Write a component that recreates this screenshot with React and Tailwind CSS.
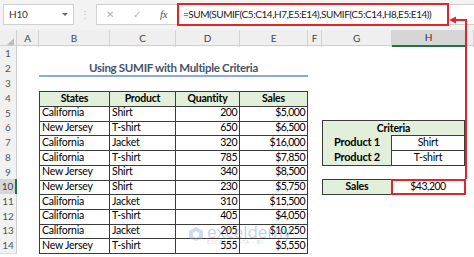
import React from 'react';

const COLS = 'grid grid-cols-[17px_22px_71px_66px_64px_68px_14px_70px_73px_1fr]';

const data = [
  ['California', 'Shirt', 200, '$5,000'],
  ['New Jersey', 'T-shirt', 650, '$6,500'],
  ['California', 'Jacket', 320, '$16,000'],
  ['California', 'T-shirt', 785, '$7,850'],
  ['New Jersey', 'Shirt', 340, '$8,500'],
  ['New Jersey', 'Shirt', 230, '$5,750'],
  ['California', 'Jacket', 310, '$15,500'],
  ['California', 'T-shirt', 405, '$4,050'],
  ['California', 'Jacket', 205, '$10,250'],
  ['New Jersey', 'T-shirt', 555, '$5,550'],
];

const B = 'border-[#3b3b3b]';
const GREEN = 'bg-[#e2efda]';
const NUM = 'tracking-[-0.5px]';

function Cell({ className = '', children }) {
  return (
    <div className={`h-full flex items-center overflow-hidden whitespace-nowrap ${className}`}>
      {children}
    </div>
  );
}

function RowHead({ n }) {
  const sel = n === 10;
  return (
    <div
      className={`h-full flex items-center justify-center text-[10px] tracking-normal border-b border-b-[#dcdcdc] ${
        sel ? 'bg-[#d6d6d6] border-r-2 border-r-[#217346] text-[#444]' : 'bg-[#f1f1f1] border-r border-r-[#cfcfcf] text-[#555]'
      }`}
    >
      {n}
    </div>
  );
}

function Toolbar() {
  return (
    <div className="h-[30px] bg-[#f3f3f3] flex items-start pt-[4px] pl-[3px]">
      <div className="w-[71px] h-[21px] bg-white border border-[#d0d0d0] flex items-center justify-between px-[5px]">
        <span className="text-[10px] text-[#333]">H10</span>
        <span className="w-0 h-0 border-l-[3px] border-r-[3px] border-t-[3px] border-l-transparent border-r-transparent border-t-[#666]" />
      </div>
      <div className="w-[22px] h-[21px] flex items-center justify-center text-[#c4c4c4] text-[10px]">⋮</div>
      <div className="flex-1 h-[21px] bg-white border border-[#d0d0d0] border-r-0 flex items-center">
        <div className="w-[80px] flex items-center justify-around text-[10px]">
          <span className="text-[#b4b4b4]">✕</span>
          <span className="text-[#b4b4b4]">✓</span>
          <span className="text-[#555] italic font-['Liberation_Serif',serif] text-[11px]">fx</span>
        </div>
        <span className="pl-[6px] text-[10px] text-[#222] tracking-[-0.45px]">
          =SUM(SUMIF(C5:C14,H7,E5:E14),SUMIF(C5:C14,H8,E5:E14))
        </span>
      </div>
    </div>
  );
}

function ColHeader() {
  const letters = ['A', 'B', 'C', 'D', 'E', 'F', 'G', 'H', ''];
  return (
    <div className={`${COLS} h-[16px] bg-[#efefef] border-b border-[#cfcfcf]`}>
      <div className="h-full flex items-end justify-end pr-[2px] pb-[2px] border-r border-[#cfcfcf]">
        <svg width="7" height="7" viewBox="0 0 7 7">
          <polygon points="7,0 7,7 0,7" fill="#bdbdbd" />
        </svg>
      </div>
      {letters.map((l, i) => (
        <div
          key={i}
          className={`h-full flex items-center justify-center text-[10px] ${
            l === 'H'
              ? 'bg-[#d6d6d6] border-b-2 border-[#217346] text-[#333]'
              : 'border-r border-[#d4d4d4] text-[#444]'
          }`}
        >
          {l}
        </div>
      ))}
    </div>
  );
}

function Row({ n, h, children }) {
  return (
    <div className={`${COLS} ${h}`}>
      <RowHead n={n} />
      {children}
    </div>
  );
}

function Empty({ count }) {
  return Array.from({ length: count }).map((_, i) => <Cell key={`e${i}`} />);
}

function App() {
  return (
    <div className="relative w-[474px] h-[257px] overflow-hidden bg-white font-['Lato',sans-serif] text-[10.5px] tracking-[-0.2px] text-black">
      <Toolbar />
      <ColHeader />

      <Row n={1} h="h-[15px]">
        <Empty count={9} />
      </Row>
      <Row n={2} h="h-[15px]">
        <Cell />
        <Cell className="col-span-4 justify-center border-b-2 border-[#8eaadb] font-bold text-[11.5px] tracking-[-0.3px] text-[#44546a]">
          Using SUMIF with Multiple Criteria
        </Cell>
        <Empty count={4} />
      </Row>
      <Row n={3} h="h-[15px]">
        <Empty count={9} />
      </Row>
      <Row n={4} h="h-[14.73px]">
        <Cell />
        {['States', 'Product', 'Quantity', 'Sales'].map((t, i) => (
          <Cell
            key={t}
            className={`justify-center font-bold ${GREEN} border-t border-b border-r ${i === 0 ? 'border-l' : ''} ${B}`}
          >
            {t}
          </Cell>
        ))}
        <Empty count={4} />
      </Row>

      {data.map((d, idx) => {
        const n = idx + 5;
        return (
          <Row key={n} n={n} h="h-[14.73px]">
            <Cell />
            <Cell className={`pl-[2px] border-l border-r border-b ${B}`}>{d[0]}</Cell>
            <Cell className={`pl-[2px] border-r border-b ${B}`}>{d[1]}</Cell>
            <Cell className={`justify-end pr-[2px] ${NUM} border-r border-b ${B}`}>{d[2]}</Cell>
            <Cell className={`justify-end pr-[2px] ${NUM} border-r border-b ${B}`}>{d[3]}</Cell>
            <Cell />
            {n === 6 && (
              <Cell className={`col-span-2 justify-center font-bold ${GREEN} border ${B}`}>Criteria</Cell>
            )}
            {(n === 7 || n === 8) && (
              <>
                <Cell className={`justify-center font-bold text-[11px] ${GREEN} border-l border-r border-b ${B}`}>
                  Product {n - 6}
                </Cell>
                <Cell className={`justify-center border-r border-b ${B}`}>{n === 7 ? 'Shirt' : 'T-shirt'}</Cell>
              </>
            )}
            {n === 10 && (
              <>
                <Cell className={`justify-center font-bold ${GREEN} border ${B}`}>Sales</Cell>
                <Cell className={`justify-center ${NUM} border-t border-r border-b ${B}`}>$43,200</Cell>
              </>
            )}
            {n !== 6 && n !== 7 && n !== 8 && n !== 10 && <Empty count={2} />}
            <Cell />
          </Row>
        );
      })}

      {/* watermark */}
      <div className="absolute left-[188px] top-[223px] flex items-center gap-[3px] opacity-40 pointer-events-none">
        <svg width="16" height="16" viewBox="0 0 16 16">
          <path d="M8 1 L15 5 L15 12 L8 15 L1 12 L1 5 Z" fill="#8fa6c4" />
          <path d="M8 5 L11 7 L11 10 L8 12 L5 10 L5 7 Z" fill="#fff" />
        </svg>
        <div className="flex flex-col leading-none">
          <span className="text-[17px] tracking-normal text-[#6f8db5] font-['Open_Sans',sans-serif]">exceldemy</span>
          <span className="text-[5px] tracking-[1px] text-[#8fa0b8]">EXCEL · DATA · BI</span>
        </div>
      </div>

      {/* annotations */}
      <svg className="absolute inset-0 pointer-events-none" width="474" height="257">
        <rect x="178" y="4" width="270" height="21" fill="none" stroke="#e0262b" strokeWidth="2" />
        <polyline points="466,179 466,20 455,20" fill="none" stroke="#e0262b" strokeWidth="2" />
        <polygon points="449,20 456,16.5 456,23.5" fill="#e0262b" />
        <rect x="392" y="180" width="73" height="14" fill="none" stroke="#e0262b" strokeWidth="2" />
      </svg>
    </div>
  );
}

export default App;
